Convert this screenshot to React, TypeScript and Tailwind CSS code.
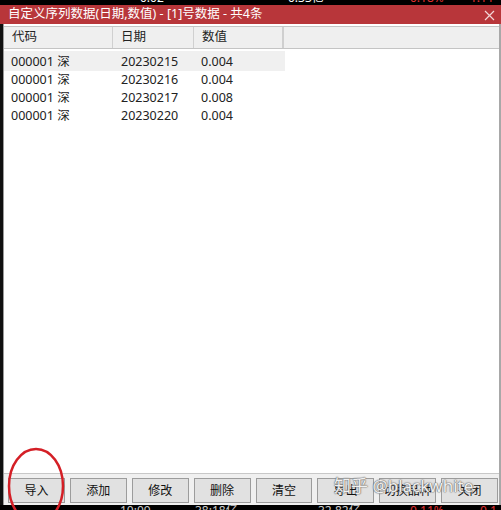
export default function App() {
    const rows = [
        { code: "000001 深", date: "20230215", value: "0.004" },
        { code: "000001 深", date: "20230216", value: "0.004" },
        { code: "000001 深", date: "20230217", value: "0.008" },
        { code: "000001 深", date: "20230220", value: "0.004" },
    ];
    const buttons = ["导入", "添加", "修改", "删除", "清空", "导出", "切换品种", "关闭"];

    return (
        <div className="relative w-[501px] h-[510px] bg-black overflow-hidden flex flex-col font-['Noto_Sans','Noto_Sans_CJK_SC',sans-serif]">
            {/* Background quote strip (cut off) */}
            <div className="relative h-[5px] overflow-hidden text-[12px] leading-none">
                <span className="absolute left-[140px] -top-[8px] text-white">0.02</span>
                <span className="absolute left-[288px] -top-[8px] text-white">0.33亿</span>
                <span className="absolute left-[410px] -top-[8px] text-[#e03030]">0.18%</span>
                <span className="absolute left-[470px] -top-[8px] text-[#e03030]">1.11</span>
            </div>

            {/* Title bar */}
            <div className="h-[19px] bg-[#b8363a] flex items-center justify-between pl-[8px] pr-[6px]">
                <span className="text-white text-[12.5px] leading-none">自定义序列数据(日期,数值) - [1]号数据 - 共4条</span>
                <svg width="11" height="11" viewBox="0 0 11 11" className="mt-[1px]">
                    <path d="M1 1L10 10M10 1L1 10" stroke="#f3d6d6" strokeWidth="1.2" />
                </svg>
            </div>

            <div className="flex-1 flex min-h-0">
                {/* Background chart edge */}
                <div className="w-[3px] bg-[#101010]" />

                <div className="flex-1 flex flex-col bg-white border-l border-[#9a9a9a] border-r-2 border-r-[#a8a8a8]">
                    {/* List */}
                    <div className="flex-1 pt-[2px]">
                        <div className="flex h-[23px] bg-[#efefef] border-t border-b border-[#c4c4c4] text-[12.5px] text-[#222] leading-none">
                            <div className="w-[109px] pl-[8px] flex items-center border-r border-[#d0d0d0]">代码</div>
                            <div className="w-[81px] pl-[8px] flex items-center border-r border-[#d0d0d0]">日期</div>
                            <div className="w-[90px] pl-[8px] flex items-center border-r-2 border-[#cfcfcf]">数值</div>
                            <div className="flex-1" />
                        </div>
                        <div className="pt-[2px]">
                            {rows.map((r, i) => (
                                <div
                                    key={i}
                                    className={`flex w-[281px] h-[18px] items-center text-[12.5px] text-[#222] leading-none ${i === 0 ? "bg-[#f0f0f0] h-[20px] pt-[2px]" : ""}`}
                                >
                                    <div className="w-[109px] pl-[7px]">{r.code}</div>
                                    <div className="w-[81px] pl-[8px]">{r.date}</div>
                                    <div className="w-[90px] pl-[7px]">{r.value}</div>
                                </div>
                            ))}
                        </div>
                    </div>

                    {/* Button bar */}
                    <div className="h-[32px] bg-[#f0f0f0] border-t border-[#c8c8c8] flex items-center gap-[5px] pl-[4px] pr-[1px] pt-[2px]">
                        {buttons.map((b) => (
                            <div
                                key={b}
                                className="flex-1 h-[25px] bg-[#e1e1e1] border border-[#9c9c9c] flex items-center justify-center text-[12px] text-[#111] leading-none"
                            >
                                {b}
                            </div>
                        ))}
                    </div>
                </div>
            </div>

            {/* Background quote strip (cut off) */}
            <div className="relative h-[5px] overflow-hidden text-[12px] leading-none">
                <span className="absolute left-[120px] top-[0px] text-[#cccccc]">10:09</span>
                <span className="absolute left-[195px] top-[0px] text-[#cccccc]">38:18亿</span>
                <span className="absolute left-[318px] top-[0px] text-[#cccccc]">32.82亿</span>
                <span className="absolute left-[410px] top-[0px] text-[#e03030]">0.11%</span>
                <span className="absolute left-[480px] top-[0px] text-[#e03030]">0.1</span>
            </div>

            {/* Red annotation circle */}
            <svg className="absolute left-0 top-[440px] pointer-events-none" width="80" height="70" viewBox="0 0 80 70">
                <ellipse cx="36" cy="46" rx="27" ry="37" fill="none" stroke="#d41f26" strokeWidth="2.5" />
            </svg>

            {/* Watermark */}
            <div className="absolute left-[334px] top-[477px] text-[17px] leading-none text-white/90 [text-shadow:0_0_1px_#666,0_0_1px_#666,0_0_2px_#888] pointer-events-none">
                知乎 @blackwhite
            </div>
        </div>
    );
}
